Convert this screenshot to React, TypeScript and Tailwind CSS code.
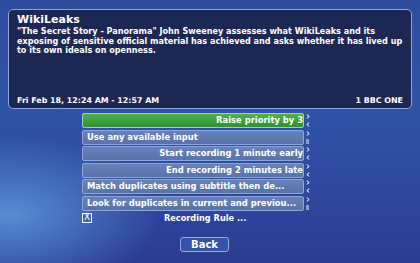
import React from 'react';

const rows = [
  { label: 'Raise priority by 3', align: 'right', active: true, scroll: false },
  { label: 'Use any available input', align: 'left', active: false, scroll: true },
  { label: 'Start recording 1 minute early', align: 'right', active: false, scroll: false },
  { label: 'End recording 2 minutes late', align: 'right', active: false, scroll: false },
  { label: 'Match duplicates using subtitle then de...', align: 'left', active: false, scroll: false },
  { label: 'Look for duplicates in current and previou...', align: 'left', active: false, scroll: true },
];

function Arrows({ scroll }: { scroll: boolean }) {
  return (
    <div className="flex h-[15px] w-[5px] flex-col items-center justify-between py-[1px]">
      <svg width="4" height="5" viewBox="0 0 4 5">
        <path d="M0.8 0.6 L3.2 2.5 L0.8 4.4" fill="none" stroke="#ffffff" strokeWidth="1" />
      </svg>
      {scroll ? (
        <span className="h-[5px] w-[3px] bg-[#8d9cc0]" />
      ) : (
        <svg width="4" height="5" viewBox="0 0 4 5">
          <path d="M3.2 0.6 L0.8 2.5 L3.2 4.4" fill="none" stroke="#ffffff" strokeWidth="1" />
        </svg>
      )}
    </div>
  );
}

export default function App() {
  return (
    <div
      className="relative h-[263px] w-[420px] overflow-hidden text-white"
      style={{ fontFamily: '"DejaVu Sans", "Liberation Sans", sans-serif' }}
    >
      <div className="absolute inset-0 bg-[linear-gradient(180deg,#2e4c9e_0%,#3053a8_40%,#2e479e_75%,#2c3b92_100%)]" />
      <div className="absolute inset-0 bg-[radial-gradient(ellipse_150px_80px_at_10px_215px,rgba(100,165,230,0.75),rgba(100,165,230,0))]" />

      <div className="relative flex flex-col">
        {/* programme info */}
        <div className="mx-[8px] mt-[9px] flex h-[100px] flex-col rounded-[5px] border border-[#8ea6d6] bg-[#1d2754] px-[8px] pb-[2px] pt-[3px]">
          <div className="text-[11px] font-bold leading-[14px]">WikiLeaks</div>
          <div className="whitespace-nowrap text-[8.1px] font-bold leading-[9.6px]">
            "The Secret Story - Panorama" John Sweeney assesses what WikiLeaks and its
            <br />
            exposing of sensitive official material has achieved and asks whether it has lived up
            <br />
            to its own ideals on openness.
          </div>
          <div className="mt-auto flex justify-between text-[7.9px] font-bold leading-[11px]">
            <span>Fri Feb 18, 12:24 AM - 12:57 AM</span>
            <span>1 BBC ONE</span>
          </div>
        </div>

        {/* rule options */}
        <div className="ml-[82px] mt-[4px] flex flex-col gap-[1.5px]">
          {rows.map((r, i) => (
            <div key={i} className="flex items-center gap-[1px]">
              <div
                className={
                  r.active
                    ? 'flex h-[15px] w-[222px] items-center justify-end overflow-hidden rounded-[2px] border border-[#9fd39f] bg-[linear-gradient(180deg,#4db24d,#2f9034)]'
                    : r.align === 'right'
                      ? 'flex h-[15px] w-[222px] items-center justify-end overflow-hidden rounded-[2px] border border-[#8ea6d6] bg-[linear-gradient(180deg,#6782b9,#5873aa)]'
                      : 'flex h-[15px] w-[222px] items-center justify-start overflow-hidden rounded-[2px] border border-[#8ea6d6] bg-[linear-gradient(180deg,#6782b9,#5873aa)] pl-[4px]'
                }
              >
                <span className="shrink-0 whitespace-nowrap text-[8.4px] font-bold">{r.label}</span>
              </div>
              <Arrows scroll={r.scroll} />
            </div>
          ))}
        </div>

        <div className="ml-[82px] mt-[1px] flex items-center">
          <div className="flex h-[10px] w-[10px] items-center justify-center border border-white text-[9px] leading-[9px]">
            X
          </div>
          <span className="ml-[72px] text-[8.2px] font-bold">Recording Rule ...</span>
        </div>

        <div className="ml-[180px] mt-[13px] flex">
          <div className="flex h-[15px] w-[49px] items-center justify-center rounded-[3px] border border-[#93a9d8] bg-[#3452a8] text-[10px] font-bold">
            Back
          </div>
        </div>
      </div>
    </div>
  );
}
